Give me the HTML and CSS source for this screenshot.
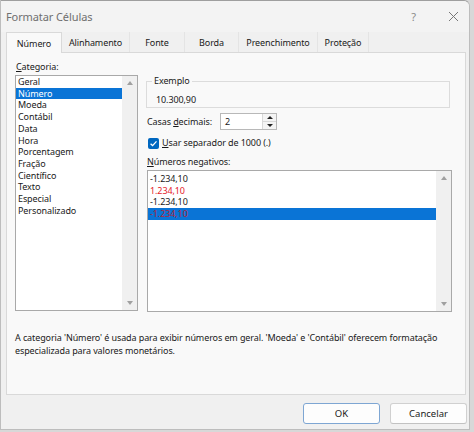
FILE: index.html
```html
<!DOCTYPE html>
<html lang="pt-BR">
<head>
  <meta charset="UTF-8">
  <title>Formatar Células</title>
  <link rel="stylesheet" href="styles.css">
</head>
<body>
  <div class="window">
    <div class="titlebar">
      <span class="title">Formatar Células</span>
      <span class="title-btn help">?</span>
      <span class="title-btn close">
        <svg width="11" height="11" viewBox="0 0 11 11"><path d="M1 1L10 10M10 1L1 10" stroke="#777" stroke-width="1"/></svg>
      </span>
    </div>

    <div class="tabs">
      <div class="tab active">Número</div>
      <div class="tab">Alinhamento</div>
      <div class="tab">Fonte</div>
      <div class="tab">Borda</div>
      <div class="tab">Preenchimento</div>
      <div class="tab">Proteção</div>
    </div>

    <div class="panel">
      <div class="columns">
        <div class="left-col">
          <div class="label cat-label"><u>C</u>ategoria:</div>
          <div class="listbox cat-list">
            <ul class="items">
              <li>Geral</li>
              <li class="selected">Número</li>
              <li>Moeda</li>
              <li>Contábil</li>
              <li>Data</li>
              <li>Hora</li>
              <li>Porcentagem</li>
              <li>Fração</li>
              <li>Científico</li>
              <li>Texto</li>
              <li>Especial</li>
              <li>Personalizado</li>
            </ul>
            <div class="scrollbar">
              <span class="arrow up"></span>
              <span class="arrow down"></span>
            </div>
          </div>
        </div>

        <div class="right-col">
          <fieldset class="sample">
            <legend>Exemplo</legend>
            <div class="sample-value">10.300,90</div>
          </fieldset>

          <div class="decimals-row">
            <span class="label decimals-label">Casas <u>d</u>ecimais:</span>
            <div class="spinner">
              <span class="spin-value">2</span>
              <div class="spin-btns">
                <span class="spin-btn"><span class="tri up"></span></span>
                <span class="spin-btn"><span class="tri down"></span></span>
              </div>
            </div>
          </div>

          <div class="check-row">
            <span class="checkbox">
              <svg width="11" height="11" viewBox="0 0 11 11"><path d="M2.6 5.7L4.6 7.6L8.5 3.4" fill="none" stroke="#fff" stroke-width="1.3"/></svg>
            </span>
            <span class="label"><u>U</u>sar separador de 1000 (.)</span>
          </div>

          <div class="label neg-label"><u>N</u>úmeros negativos:</div>
          <div class="listbox neg-list">
            <ul class="items">
              <li>-1.234,10</li>
              <li class="red">1.234,10</li>
              <li>-1.234,10</li>
              <li class="selected red">-1.234,10</li>
            </ul>
            <div class="scrollbar">
              <span class="arrow up"></span>
              <span class="arrow down"></span>
            </div>
          </div>
        </div>
      </div>

      <p class="description">A categoria 'Número' é usada para exibir números em geral. 'Moeda' e 'Contábil' oferecem formatação especializada para valores monetários.</p>
    </div>

    <div class="footer">
      <button class="btn default">OK</button>
      <button class="btn">Cancelar</button>
    </div>
  </div>
</body>
</html>
```

FILE: styles.css
```css
:root {
  --window-bg: #f0f0f0;
  --panel-bg: #f9f9f9;
  --border: #d9d9d9;
  --list-border: #a9a9a9;
  --accent: #0067c0;
  --select: #0a74d6;
  --text: #1a1a1a;
  --red: #e5212b;
}

body {
  margin: 0;
  background: #d8d8d8;
  font-family: "Noto Sans", sans-serif;
  font-size: 9px;
  letter-spacing: -0.1px;
  color: var(--text);
}

u {
  text-decoration: underline;
  text-underline-offset: 1px;
}

.window {
  width: 468px;
  height: 428px;
  background: var(--window-bg);
  border: 1px solid #bdbdbd;
  border-top-color: #9e9e9e;
  border-radius: 0 6px 0 0;
  display: flex;
  flex-direction: column;
}

/* title bar */
.titlebar {
  height: 31px;
  display: flex;
  align-items: center;
  background: #f3f3f3;
  border-radius: 0 6px 0 0;
}

.title {
  margin-left: 5px;
  font-size: 11px;
  letter-spacing: -0.1px;
  color: #6f6f6f;
  flex: 1;
}

.title-btn {
  color: #8a8a8a;
  font-size: 11px;
  display: flex;
  align-items: center;
}

.help {
  margin-right: 32px;
}

.close {
  margin-right: 10px;
}

/* tabs */
.tabs {
  display: flex;
  height: 20px;
  margin-left: 5px;
  position: relative;
  z-index: 1;
}

.tab {
  box-sizing: border-box;
  display: flex;
  align-items: center;
  justify-content: center;
  border-right: 1px solid #e4e4e4;
  background: var(--window-bg);
}

.tab.active {
  background: var(--panel-bg);
  border: 1px solid var(--border);
  border-bottom: none;
  margin-bottom: -1px;
}

.tab:nth-child(1) { width: 56px; }
.tab:nth-child(2) { width: 68px; }
.tab:nth-child(3) { width: 55px; }
.tab:nth-child(4) { width: 54px; }
.tab:nth-child(5) { width: 79px; }
.tab:nth-child(6) { width: 51px; }

/* panel */
.panel {
  height: 333px;
  margin: 0 3px 0 5px;
  padding: 8px 0 0 8px;
  background: var(--panel-bg);
  border: 1px solid var(--border);
}

.columns {
  display: grid;
  grid-template-columns: 123px 305px;
  column-gap: 9px;
  align-items: start;
}

.label {
  line-height: 12px;
}

.cat-label {
  margin: 0 0 2px 1px;
}

.listbox {
  background: #fff;
  border: 1px solid var(--list-border);
  display: flex;
}

.cat-list {
  height: 234px;
}

.neg-list {
  height: 140px;
}

.items {
  list-style: none;
  margin: 0;
  padding: 0;
  flex: 1;
}

.items li {
  line-height: 11.7px;
  padding-left: 2px;
}

.items li.selected {
  background: var(--select);
  color: #fff;
}

.items li.red {
  color: var(--red);
}

.items li.selected.red {
  color: #b3243a;
}

.neg-list .items {
  padding-top: 2px;
}

.scrollbar {
  width: 15px;
  background: #f0f0f0;
  display: flex;
  flex-direction: column;
  justify-content: space-between;
  align-items: center;
  padding: 5px 0;
}

.arrow {
  width: 0;
  height: 0;
  border-left: 3.5px solid transparent;
  border-right: 3.5px solid transparent;
}

.arrow.up {
  border-bottom: 4px solid #a0a0a0;
}

.arrow.down {
  border-top: 4px solid #a0a0a0;
}

/* right column */
.sample {
  margin: 14px 2px 0 -1px;
  padding: 7px 5px 1px;
  border: 1px solid #dcdcdc;
}

.sample legend {
  padding: 0 2px;
  line-height: 12px;
}

.sample-value {
  line-height: 12px;
  margin-left: 4px;
}

.decimals-row {
  display: flex;
  align-items: center;
  margin-top: 5px;
}

.decimals-label {
  width: 73px;
}

.spinner {
  width: 55px;
  height: 15px;
  background: #fff;
  border: 1px solid #b8b8b8;
  display: flex;
  align-items: center;
}

.spin-value {
  flex: 1;
  padding-left: 4px;
}

.spin-btns {
  width: 13px;
  height: 15px;
  border-left: 1px solid #d8d8d8;
  display: flex;
  flex-direction: column;
}

.spin-btn {
  flex: 1;
  display: flex;
  align-items: center;
  justify-content: center;
  background: #f4f4f4;
}

.spin-btn + .spin-btn {
  border-top: 1px solid #d8d8d8;
}

.tri {
  width: 0;
  height: 0;
  border-left: 3px solid transparent;
  border-right: 3px solid transparent;
}

.tri.up {
  border-bottom: 3.5px solid #222;
}

.tri.down {
  border-top: 3.5px solid #222;
}

.check-row {
  display: flex;
  align-items: center;
  gap: 3px;
  margin-top: 7px;
  margin-left: 1px;
}

.checkbox {
  width: 11px;
  height: 11px;
  border-radius: 2px;
  background: var(--accent);
  display: flex;
}

.neg-label {
  margin-top: 7px;
  margin-bottom: 2px;
}

.description {
  margin: 19px 0 0 0;
  line-height: 13px;
  width: 448px;
}

/* footer */
.footer {
  flex: 1;
  display: flex;
  justify-content: flex-end;
  align-items: flex-start;
  gap: 10px;
  padding: 8px 2px 0 0;
}

.btn {
  width: 77px;
  height: 21px;
  font-family: inherit;
  font-size: 9.5px;
  color: var(--text);
  background: #fdfdfd;
  border: 1px solid #d0d0d0;
  border-bottom-color: #c2c2c2;
  border-radius: 3px;
}

.btn.default {
  border-color: #7ea6d3;
}
```
